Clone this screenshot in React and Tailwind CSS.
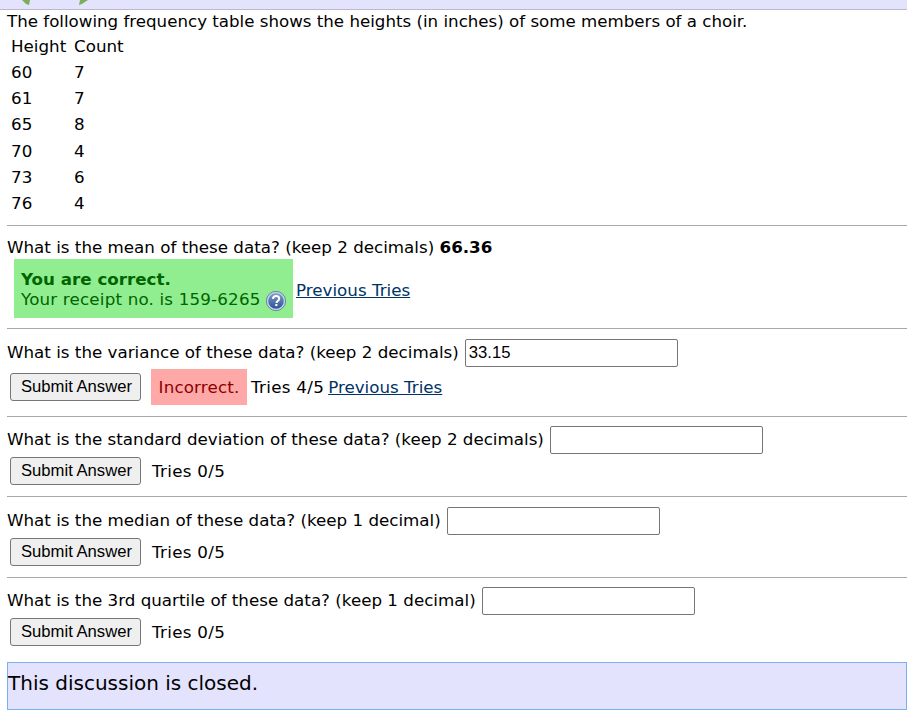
const ROWS = [
  ['60', '7'],
  ['61', '7'],
  ['65', '8'],
  ['70', '4'],
  ['73', '6'],
  ['76', '4'],
]

function HelpIcon() {
  return (
    <svg width="20" height="20" viewBox="0 0 20 20" className="inline-block align-[-6px] ml-[5px]">
      <defs>
        <linearGradient id="help" x1="0" y1="0" x2="0" y2="1">
          <stop offset="0" stopColor="#7f9ccb" />
          <stop offset="1" stopColor="#2c5296" />
        </linearGradient>
      </defs>
      <circle cx="10" cy="10" r="9.6" fill="#c9d6ea" stroke="#4f6fa8" strokeWidth="0.8" />
      <circle cx="10" cy="10" r="7.8" fill="url(#help)" />
      <path d="M6.9 7.8c.2-1.8 1.5-2.7 3.2-2.7 1.8 0 3.1 1 3.1 2.6 0 1.3-.8 1.9-1.6 2.4-.8.5-1.1.9-1.1 1.8" fill="none" stroke="#fff" strokeWidth="2" />
      <rect x="9.3" y="13" width="2.1" height="2.1" fill="#fff" />
    </svg>
  )
}

function SubmitButton() {
  return (
    <button className="h-[28px] w-[131px] pl-[2px] pb-[2px] rounded-[3px] border border-[#767676] bg-[#efefef] font-['Liberation_Sans'] text-[16.67px] text-black">
      Submit Answer
    </button>
  )
}

function Prompt({ text, value }) {
  return (
    <div className="flex items-center h-[28px]">
      <span className="pb-[2px]">{text}</span>
      <input
        readOnly
        value={value || ''}
        className="ml-[6px] h-[28px] w-[213px] rounded-[2px] border border-[#767676] bg-white px-[3px] font-['Liberation_Sans'] text-[16.67px] text-black"
      />
    </div>
  )
}

function Question({ text, className }) {
  return (
    <div className={className}>
      <Prompt text={text} />
      <div className="flex items-center mt-[3px] ml-[3px]">
        <SubmitButton />
        <span className="ml-[11px] pt-[1px] tracking-[0.3px]">Tries 0/5</span>
      </div>
    </div>
  )
}

export default function App() {
  return (
    <div className="w-[907px] h-[725px] bg-white overflow-hidden font-['DejaVu_Sans',sans-serif] text-[16.72px] leading-[19px] text-black pl-[7px]">
      <div className="-ml-[7px] h-[10px] border-b border-[#b9b9c9] bg-[#e3e3fd] relative">
        <svg width="110" height="9" viewBox="0 0 110 9" className="absolute left-0 top-0">
          <path d="M22 0h8l-1 5 -3-1z" fill="#7fae5a" />
          <path d="M88 0h-8l-1 5 3-1z" fill="#7fae5a" />
        </svg>
      </div>
      <p className="mt-[2px] text-[16.67px]">The following frequency table shows the heights (in inches) of some members of a choir.</p>
      <table className="mt-[2.5px] ml-[2px] border-separate border-spacing-0">
        <tbody>
          <tr className="h-[26px]">
            <td className="w-[65px] pl-[2px]">Height</td>
            <td>Count</td>
          </tr>
          {ROWS.map(([h, c]) => (
            <tr key={h} className="h-[26.2px]">
              <td className="pl-[2px]">{h}</td>
              <td>{c}</td>
            </tr>
          ))}
        </tbody>
      </table>
      <hr className="mt-[8.8px] border-t border-[#a8a8a8]" />

      <p className="mt-[12px]">
        What is the mean of these data? (keep 2 decimals) <b>66.36</b>
      </p>
      <div className="flex items-center mt-[2px] ml-[7px]">
        <div className="w-[279px] h-[59px] bg-[#90ee90] text-[#006400] px-[7px] pt-[9.3px] leading-[21px]">
          <b className="block leading-[20.4px]">You are correct.</b>
          <span className="whitespace-nowrap tracking-[0.18px]">Your receipt no. is 159-6265<HelpIcon /></span>
        </div>
        <a className="ml-[3px] mt-[2.5px] text-[#003366] underline">Previous Tries</a>
      </div>
      <hr className="mt-[10px] border-t border-[#a8a8a8]" />

      <div className="mt-[10px]">
        <Prompt text="What is the variance of these data? (keep 2 decimals)" value="33.15" />
      </div>
      <div className="flex items-center mt-[2px]">
        <div className="ml-[3px]"><SubmitButton /></div>
        <span className="ml-[10px] h-[36px] w-[96px] bg-[#ffa8a8] text-[#8b0000] tracking-[0.15px] flex items-center justify-center">Incorrect.</span>
        <span className="ml-[4px] tracking-[0.3px]">Tries 4/5</span>
        <a className="ml-[4px] text-[#003366] underline">Previous Tries</a>
      </div>
      <hr className="mt-[11px] border-t border-[#a8a8a8]" />

      <Question className="mt-[9px]" text="What is the standard deviation of these data? (keep 2 decimals)" />
      <hr className="mt-[11px] border-t border-[#a8a8a8]" />
      <Question className="mt-[10px]" text="What is the median of these data? (keep 1 decimal)" />
      <hr className="mt-[11px] border-t border-[#a8a8a8]" />
      <Question className="mt-[9px]" text="What is the 3rd quartile of these data? (keep 1 decimal)" />

      <div className="mt-[16px] h-[48px] pb-[6px] border border-[#7ab0f0] bg-[#e3e3fd] flex items-center text-[20px]">
        This discussion is closed.
      </div>
    </div>
  )
}
